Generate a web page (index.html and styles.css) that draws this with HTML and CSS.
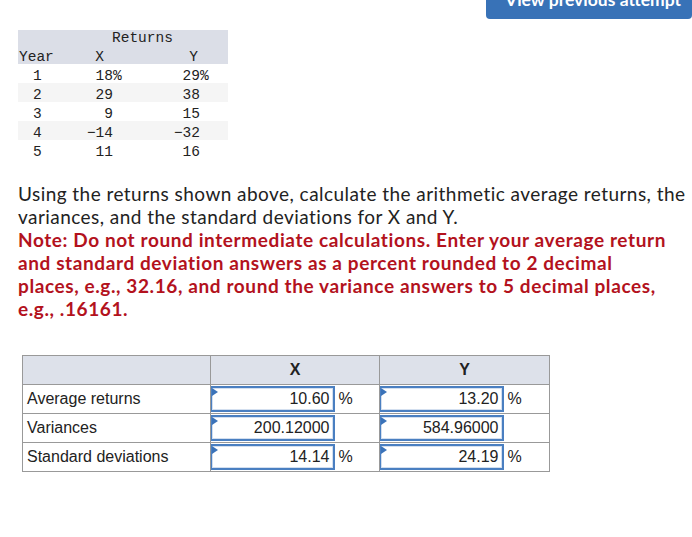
FILE: index.html
```html
<!DOCTYPE html>
<html>
<head>
<meta charset="utf-8">
<link rel="stylesheet" href="styles.css">
</head>
<body>
<div class="page">
  <div class="topbar"><a class="prev-btn">View previous attempt</a></div>
  <table class="returns">
    <colgroup><col class="c1"><col class="c2"><col class="c3"></colgroup>
    <thead>
      <tr class="h1"><th></th><th colspan="2" class="ret">Returns</th></tr>
      <tr class="h2"><th class="yr">Year</th><th class="hx">X</th><th class="hy">Y</th></tr>
    </thead>
    <tbody>
      <tr><td class="yr">1</td><td class="vx">18<span class="pct">%</span></td><td class="vy">29<span class="pct">%</span></td></tr>
      <tr class="alt"><td class="yr">2</td><td class="vx">29</td><td class="vy">38</td></tr>
      <tr><td class="yr">3</td><td class="vx">9</td><td class="vy">15</td></tr>
      <tr class="alt"><td class="yr">4</td><td class="vx">−14</td><td class="vy">−32</td></tr>
      <tr><td class="yr">5</td><td class="vx">11</td><td class="vy">16</td></tr>
    </tbody>
  </table>

  <div class="question">
    <p class="intro">Using the returns shown above, calculate the arithmetic average returns, the variances, and the standard deviations for X and Y.</p>
    <p class="note">Note: Do not round intermediate calculations. Enter your average return and standard deviation answers as a percent rounded to 2 decimal places, e.g., 32.16, and round the variance answers to 5 decimal places, e.g., .16161.</p>
  </div>

  <table class="answers">
    <colgroup><col class="a1"><col class="ain"><col class="apc"><col class="ain2"><col class="apc2"></colgroup>
    <thead>
      <tr><th></th><th colspan="2">X</th><th colspan="2">Y</th></tr>
    </thead>
    <tbody>
      <tr><td class="lbl">Average returns</td><td class="inp"><div class="box">10.60</div></td><td class="unit">%</td><td class="inp"><div class="box">13.20</div></td><td class="unit">%</td></tr>
      <tr><td class="lbl">Variances</td><td class="inp"><div class="box">200.12000</div></td><td class="unit"></td><td class="inp"><div class="box">584.96000</div></td><td class="unit"></td></tr>
      <tr><td class="lbl">Standard deviations</td><td class="inp"><div class="box">14.14</div></td><td class="unit">%</td><td class="inp"><div class="box">24.19</div></td><td class="unit">%</td></tr>
    </tbody>
  </table>
</div>
</body>
</html>
```
FILE: styles.css
```css
html, body { margin: 0; padding: 0; background: #fff; }
.page { position: relative; width: 692px; height: 537px; overflow: hidden; }

.topbar { display: flex; justify-content: flex-end; height: 0; }
.prev-btn {
  position: absolute; left: 486px; right: 0; top: -10px;
  height: 29px; box-sizing: border-box;
  background: #3872b7; color: #fff; border-radius: 0 0 4px 4px;
  font-family: Lato, "Open Sans", sans-serif; font-weight: 700; font-size: 17.5px;
  line-height: 20px; padding-left: 19px; white-space: nowrap; overflow: hidden;
}

.returns {
  margin: 30px 0 0 18px; border-collapse: collapse; table-layout: fixed; width: 210px;
  font-family: "Liberation Mono", "DejaVu Sans Mono", monospace; font-size: 14.5px; color: #222;
}
.returns col.c1 { width: 50px; }
.returns col.c2 { width: 58px; }
.returns col.c3 { width: 102px; }
.returns thead tr { background: #dbdee7; }
.returns th { font-weight: 400; padding: 0; height: 17px; line-height: 17px; box-sizing: border-box; }
.returns tr.h2 th { padding-top: 3px; line-height: 14px; height: 17px; }
.returns th.ret { text-align: left; padding-left: 44px; }
.returns th.yr { text-align: left; padding-left: 1px; }
.returns th.hx { text-align: right; padding-right: 22px; }
.returns th.hy { text-align: right; padding-right: 30px; }
.returns tbody tr.alt { background: #f5f5f5; }
.returns td { padding: 5px 0 0 0; height: 19px; line-height: 14px; box-sizing: border-box; }
.returns td.yr { padding-left: 15px; }
.returns td.vx { text-align: right; padding-right: 13px; }
.returns td.vy { text-align: right; padding-right: 28px; }
.pct { margin-right: -1ch; }

.question {
  margin: 23px 0 0 18px;
  font-family: Lato, "Open Sans", sans-serif; font-size: 19px; line-height: 23px; color: #222;
}
.question p { margin: 0; }
.intro { width: 674px; letter-spacing: 0.45px; }
.note { width: 656px; color: #b3121d; font-weight: 700; letter-spacing: 0.6px; }

.answers {
  margin: 35px 0 0 22px; border-collapse: collapse; table-layout: fixed; width: 527px;
  font-family: "Liberation Sans", Arial, sans-serif; font-size: 16px; color: #222;
}
.answers col.a1 { width: 188px; }
.answers col.ain { width: 124px; }
.answers col.apc { width: 45px; }
.answers col.ain2 { width: 124px; }
.answers col.apc2 { width: 46px; }
.answers th {
  background: #dde1ea; border: 1px solid #999; height: 28px; padding: 0;
  font-weight: 700; font-size: 16px;
}
.answers td { border-top: 1px solid #999; border-bottom: 1px solid #999; height: 28px; padding: 0; }
.answers td.lbl { border-left: 1px solid #999; border-right: 1px solid #999; padding-left: 4px; }
.answers td.inp { padding: 0; border-left: 1px solid #999; }
.answers td.unit { padding-left: 4px; border-right: 1px solid #999; }
.box {
  position: relative; height: 26px; box-sizing: border-box;
  border: 2px solid #4a7fc1; border-left: 1px solid #4a7fc1; background: #fff;
  text-align: right; padding-right: 3px; line-height: 22px;
  box-shadow: inset 0 0 0 1px #d3dfef;
}
.box::before {
  content: ""; position: absolute; left: 0; top: 0;
  border-top: 4px solid transparent; border-bottom: 4px solid transparent;
  border-left: 6px solid #3b73b9;
}
```
